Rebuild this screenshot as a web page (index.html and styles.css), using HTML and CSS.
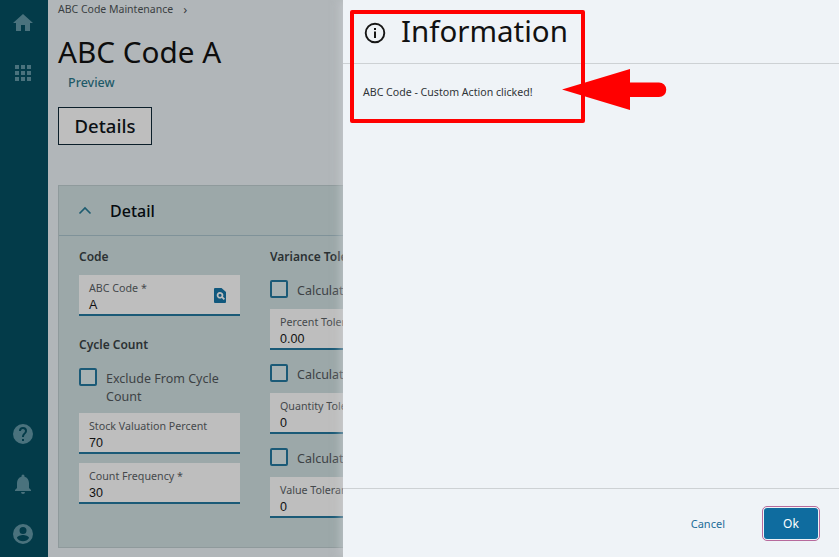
FILE: index.html
```html
<!DOCTYPE html>
<html lang="en">
<head>
<meta charset="utf-8">
<title>ABC Code Maintenance</title>
<link rel="stylesheet" href="styles.css">
</head>
<body>
<div class="app">
  <nav class="rail">
    <svg class="rail-icon" viewBox="0 0 24 24"><path d="M10 20v-6h4v6h5v-8h3L12 3 2 12h3v8z"/></svg>
    <svg class="rail-icon apps" viewBox="0 0 24 24"><path d="M4 4h4v4H4zM10 4h4v4h-4zM16 4h4v4h-4zM4 10h4v4H4zM10 10h4v4h-4zM16 10h4v4h-4zM4 16h4v4H4zM10 16h4v4h-4zM16 16h4v4h-4z"/></svg>
    <div class="rail-spacer"></div>
    <svg class="rail-icon" viewBox="0 0 24 24"><path d="M12 2a10 10 0 1 0 0 20 10 10 0 0 0 0-20zm1 17h-2v-2h2v2zm2.070-7.750-.9.920C13.450 12.900 13 13.500 13 15h-2v-.5c0-1.100.45-2.100 1.170-2.830l1.240-1.260A2 2 0 1 0 10 9H8a4 4 0 1 1 8 0c0 .88-.36 1.680-.93 2.250z"/></svg>
    <svg class="rail-icon" viewBox="0 0 24 24"><path d="M12 22a2 2 0 0 0 2-2h-4a2 2 0 0 0 2 2zm6-6v-5c0-3.070-1.630-5.640-4.500-6.320V4a1.500 1.500 0 0 0-3 0v.68C7.640 5.360 6 7.920 6 11v5l-2 2v1h16v-1l-2-2z"/></svg>
    <svg class="rail-icon" viewBox="0 0 24 24"><path d="M12 2a10 10 0 1 0 0 20 10 10 0 0 0 0-20zm0 3a3.500 3.500 0 1 1 0 7 3.500 3.500 0 0 1 0-7zm0 14.200a7.200 7.200 0 0 1-6-3.220c.03-2 4-3.080 6-3.080s5.970 1.090 6 3.080a7.200 7.200 0 0 1-6 3.220z"/></svg>
  </nav>
  <main class="page">
    <div class="crumbs"><span>ABC Code Maintenance</span><span class="crumb-sep">›</span></div>
    <h1 class="title">ABC Code A</h1>
    <div class="subtitle">Preview</div>
    <div class="tab">Details</div>
    <section class="card">
      <header class="card-head">
        <svg class="chevron" viewBox="0 0 14 9"><path d="M1.500 7.500 7 2l5.500 5.500" fill="none" stroke-width="1.600"/></svg>
        <span>Detail</span>
      </header>
      <div class="card-body">
        <div class="col">
          <h3 class="group first">Code</h3>
          <div class="field has-icon">
            <label>ABC Code *</label><div class="value">A</div>
            <svg class="lookup" viewBox="0 0 12 15"><path fill-rule="evenodd" d="M1 0h6.500L12 4v10a1 1 0 0 1-1 1H1a1 1 0 0 1-1-1V1a1 1 0 0 1 1-1zm5 4a3.300 3.300 0 1 0 1.800 6.060L9.700 12 11 10.700 9.050 8.800A3.300 3.300 0 0 0 6 4zm0 1.700a1.600 1.600 0 1 1 0 3.200 1.600 1.600 0 0 1 0-3.200z"/></svg>
          </div>
          <h3 class="group cycle">Cycle Count</h3>
          <div class="check multi"><span class="box"></span><span class="check-label">Exclude From Cycle Count</span></div>
          <div class="field"><label>Stock Valuation Percent</label><div class="value">70</div></div>
          <div class="field gap"><label>Count Frequency *</label><div class="value">30</div></div>
        </div>
        <div class="col">
          <h3 class="group first">Variance Tolerance</h3>
          <div class="check"><span class="box"></span><span class="check-label">Calculate Percent</span></div>
          <div class="field"><label>Percent Tolerance</label><div class="value">0.00</div></div>
          <div class="check next"><span class="box"></span><span class="check-label">Calculate Quantity</span></div>
          <div class="field"><label>Quantity Tolerance</label><div class="value">0</div></div>
          <div class="check next"><span class="box"></span><span class="check-label">Calculate Value</span></div>
          <div class="field"><label>Value Tolerance</label><div class="value">0</div></div>
        </div>
      </div>
    </section>
  </main>
  <aside class="drawer">
    <header class="drawer-head">
      <svg class="info" viewBox="0 0 24 24"><circle cx="12" cy="12" r="9.300" fill="none" stroke="#161616" stroke-width="1.900"/><path d="M11 10.500h2V17h-2zM11 7h2v2h-2z" fill="#161616"/></svg>
      <h2>Information</h2>
    </header>
    <div class="drawer-body">ABC Code - Custom Action clicked!</div>
    <footer class="drawer-foot">
      <span class="cancel">Cancel</span>
      <span class="ok-ring"><span class="ok">Ok</span></span>
    </footer>
    <div class="redbox"></div>
    <svg class="arrow" viewBox="0 0 106 42"><path d="M1 20.500 69 0v13.500h29a7 7 0 0 1 0 14.500H69v13z" fill="#f00"/></svg>
  </aside>
</div>
</body>
</html>
```
FILE: styles.css
```css
* { box-sizing: border-box; }
html, body { margin: 0; height: 100%; }
body { font-family: "Noto Sans", "Open Sans", sans-serif; overflow: hidden; background: #b1b6b9; }
.app { position: relative; display: flex; width: 839px; height: 557px; overflow: hidden; }
.rail { width: 48px; flex: none; background: #033b49; display: flex; flex-direction: column; align-items: center; padding: 11px 2px 11px 0; }
.rail-icon { width: 24px; height: 24px; fill: #4a727d; }
.rail-icon.apps { margin-top: 26px; }
.rail-spacer { flex: 1; }
.rail-spacer + .rail-icon { margin-bottom: 26px; }
.rail-spacer + .rail-icon + .rail-icon { margin-bottom: 26px; }
.page { flex: 1; min-width: 0; padding: 0 0 0 10px; background: #b1b6b9; color: #111; }
.crumbs { display: flex; gap: 10px; padding-top: 1px; height: 16px; font-size: 10.500px; line-height: 16px; color: #3a3f42; }
.crumb-sep { font-size: 13px; line-height: 16px; }
.title { margin: 15px 0 0; font-size: 29.700px; line-height: 42px; font-weight: 400; color: #0d0d0d; }
.subtitle { margin: 1px 0 0 10px; font-size: 12.500px; line-height: 18px; font-weight: 500; color: #1e5a68; }
.tab { width: 94px; height: 38px; margin-top: 15px; border: 1px solid #0b1f2a; background: #bebebe; font-size: 18.500px; font-weight: 500; line-height: 36px; text-align: center; color: #0b0f14; }
.card { width: 781px; height: 363px; margin-top: 40px; border: 1px solid #8f9a9c; background: #9ca8a9; }
.card-head { height: 50px; display: flex; align-items: center; gap: 18px; padding-left: 19px; border-bottom: 1px solid #7f9299; font-size: 16px; font-weight: 500; color: #060b0f; }
.chevron { width: 14px; height: 9px; stroke: #1d5c70; }
.card-body { display: flex; gap: 30px; padding: 0 20px; }
.col { width: 161px; flex: none; }
.group { margin: 0; font-size: 12px; line-height: 18px; font-weight: 600; color: #2b3133; white-space: nowrap; }
.group.first { padding-top: 12px; height: 29px; }
.group.cycle { margin-top: 20px; }
.group.first + .field { margin-top: 10px; }
.field { position: relative; width: 161px; height: 41px; background: #bebebe; border-bottom: 2px solid #1b5a77; padding: 5px 10px 0; }
.field.gap { margin-top: 9px; }
.field label { display: block; font-size: 10.700px; line-height: 16px; color: #45494c; white-space: nowrap; }
.value { margin-top: 1px; font-family: "Liberation Sans", Arial, sans-serif; font-size: 12.500px; line-height: 17px; color: #111; }
.lookup { position: absolute; right: 14px; top: 13px; width: 12px; height: 15px; fill: #11587d; }
.check { display: flex; gap: 9px; height: 44px; padding-top: 15px; font-size: 12.500px; line-height: 18px; color: #3d4245; white-space: nowrap; }
.check.next { height: 43px; padding-top: 14px; }
.check.multi { white-space: normal; height: 45px; margin-top: 14px; padding-top: 0; align-items: flex-start; }
.box { width: 18px; height: 18px; flex: none; border: 2px solid #1b5a77; border-radius: 2px; background: #a8b2b3; }
.check-label { padding-top: 2px; }
.multi .check-label { width: 130px; }
.drawer { position: absolute; left: 343px; top: 0; width: 496px; height: 557px; background: #eff3f7; display: flex; flex-direction: column; box-shadow: -3px 0 8px rgba(205,210,214,.55); }
.drawer-head { height: 64px; flex: none; display: flex; align-items: center; gap: 14px; padding: 0 0 0 20px; border-bottom: 1px solid #cdd1d4; }
.info { width: 24px; height: 24px; margin-top: 3px; }
.drawer-head h2 { margin: -2px 0 0; font-size: 29.500px; line-height: 42px; font-weight: 400; color: #111; }
.drawer-body { flex: 1; padding: 20px 20px; font-size: 10.600px; line-height: 16px; color: #2f3437; }
.drawer-foot { height: 69px; flex: none; display: flex; align-items: center; justify-content: flex-end; gap: 37px; padding: 0 19px 0 0; border-top: 1px solid #cdd1d4; }
.cancel { font-size: 11px; color: #1c6d99; }
.ok-ring { display: block; padding: 1px; border: 1px solid #b76a9c; border-radius: 5px; }
.ok { display: block; width: 54px; height: 31px; background: #0f6c9f; border-radius: 3px; color: #fff; text-align: center; line-height: 31px; font-size: 12px; font-weight: 400; }
.redbox { position: absolute; left: 7px; top: 10px; width: 235px; height: 113px; border: 4px solid #f00; border-radius: 2px; }
.arrow { position: absolute; left: 218px; top: 69px; width: 106px; height: 42px; }
```
